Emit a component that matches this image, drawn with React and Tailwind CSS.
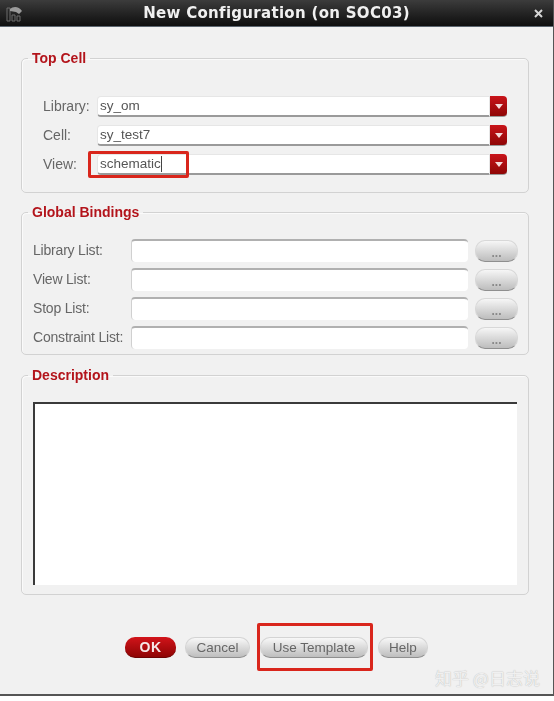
const ui = { fontFamily: '"Liberation Sans", Arial, sans-serif' };

function Group({ title, className, children }) {
  return (
    <fieldset className={`border border-[#d2d2d2] rounded-[5px] shadow-[inset_1px_1px_0_#fafafa] ${className}`}>
      <legend className="ml-[6px] px-[4px] text-[14px] leading-[16px] font-bold text-[#b3141b]">{title}</legend>
      {children}
    </fieldset>
  );
}

function ComboRow({ label, value, caret }) {
  return (
    <div className="flex items-center h-[21px]">
      <span className="w-[75px] pl-[21px] text-[14px] text-[#666]">{label}</span>
      <div className="w-[393px] h-[21px] bg-white rounded-l-[4px] border border-[#e6e6e6] border-b-[#9a9a9a] border-b-2 flex items-center pl-[2px] text-[13.5px] text-[#555]">
        {value}
        {caret && <span className="w-px h-[16px] bg-[#444]" />}
      </div>
      <div className="w-[17px] h-[21px] rounded-r-[4px] bg-gradient-to-b from-[#c9141a] to-[#8f0606] border-b border-[#999] flex items-center justify-center">
        <svg width="8" height="5" viewBox="0 0 8 5"><path d="M0 0h8L4 5z" fill="#f4dcdc" /></svg>
      </div>
    </div>
  );
}

function ListRow({ label }) {
  return (
    <div className="flex items-center h-[23px]">
      <span className="w-[109px] pl-[11px] text-[14px] tracking-[-0.2px] whitespace-nowrap text-[#666]">{label}</span>
      <div className="w-[337px] h-[23px] bg-white rounded-[4px] border-t-2 border-l border-[#b0b0b0] border-l-[#d0d0d0]" />
      <button className="ml-[7px] w-[43px] h-[22px] rounded-[10px] bg-gradient-to-b from-[#f6f6f6] to-[#bdbdbd] border border-[#d8d8d8] border-b-[#8f8f8f] text-[12px] leading-[24px] font-bold text-[#888]">...</button>
    </div>
  );
}

function PillButton({ width, children }) {
  return (
    <button className={`${width} h-[21px] rounded-[10px] bg-gradient-to-b from-[#f8f8f8] to-[#bebebe] border border-[#d4d4d4] border-b-[#8f8f8f] text-[13.5px] leading-[19px] text-[#666]`}>
      {children}
    </button>
  );
}

export default function App() {
  return (
    <div className="relative w-[554px] h-[701px] bg-white overflow-hidden" style={ui}>
      <div className="h-[696px] bg-[#f1f1f1] border-b-2 border-r border-[#555] flex flex-col blur-[0.35px]">
        {/* Title bar */}
        <div className="relative h-[27px] shrink-0 pt-[1px] bg-gradient-to-b from-[#3c3c3c] to-[#0f0f0f] border-b border-[#5c6670] flex items-center justify-center">
          <svg className="absolute left-[5px] top-[6px]" width="18" height="17" viewBox="0 0 18 17" fill="none">
            <path d="M2 2h3v13H2zM7 9h3v6H7zM12 10h3v5h-3z" stroke="#6d6d6d" strokeWidth="1" />
            <path d="M5 3c3-3 9-3 12 2l-3 3-3-2-6-1z" fill="#9a9a9a" />
          </svg>
          <span className="font-bold tracking-[0.3px] text-[#f0f0f0] text-[15px]" style={{ fontFamily: '"DejaVu Sans", sans-serif' }}>New Configuration (on SOC03)</span>
          <svg className="absolute right-[10px] top-[9px]" width="9" height="9" viewBox="0 0 9 9"><path d="M1 1l7 7M8 1l-7 7" stroke="#d5d5d5" strokeWidth="2" /></svg>
        </div>

        {/* Body */}
        <div className="ml-[21px] w-[508px]">
          <Group title="Top Cell" className="mt-[23px] h-[143px] pt-[30px] flex flex-col">
            <div className="flex flex-col gap-[8px]">
              <ComboRow label="Library:" value="sy_om" />
              <ComboRow label="Cell:" value="sy_test7" />
              <ComboRow label="View:" value="schematic" caret />
            </div>
          </Group>

          <Group title="Global Bindings" className="mt-[11px] h-[151px] pt-[19px]">
            <div className="flex flex-col gap-[6px]">
              <ListRow label="Library List:" />
              <ListRow label="View List:" />
              <ListRow label="Stop List:" />
              <ListRow label="Constraint List:" />
            </div>
          </Group>

          <Group title="Description" className="mt-[12px] h-[228px] pt-[19px]">
            <div className="ml-[11px] w-[484px] h-[183px] bg-white border-t-2 border-l-2 border-[#3a3a3a]" />
          </Group>

          <div className="mt-[42px] flex items-center pl-[104px]">
            <button className="w-[51px] h-[21px] rounded-[10px] bg-gradient-to-b from-[#d2141a] to-[#8f0505] border-b border-[#6d0303] text-[14px] leading-[19px] font-bold tracking-[0.5px] text-[#f6e8e8]">OK</button>
            <div className="ml-[9px] flex gap-[10px]">
              <PillButton width="w-[65px]">Cancel</PillButton>
              <PillButton width="w-[108px]">Use Template</PillButton>
              <PillButton width="w-[50px]">Help</PillButton>
            </div>
          </div>
        </div>
      </div>

      {/* Annotation boxes */}
      <div className="absolute left-[88px] top-[151px] w-[101px] h-[27px] border-[3px] border-[#d9261c] rounded-[2px]" />
      <div className="absolute left-[257px] top-[623px] w-[116px] h-[48px] border-[3px] border-[#d9261c] rounded-[2px]" />

      {/* Watermark */}
      <div
        className="absolute left-[435px] top-[667px] text-[17px] leading-[22px] whitespace-nowrap text-[#f0f0f0] [text-shadow:0_0_1px_#b0b0b0]"
        style={{ fontFamily: '"Noto Sans CJK SC", sans-serif' }}
      >
        知乎 @日志说
      </div>
    </div>
  );
}
